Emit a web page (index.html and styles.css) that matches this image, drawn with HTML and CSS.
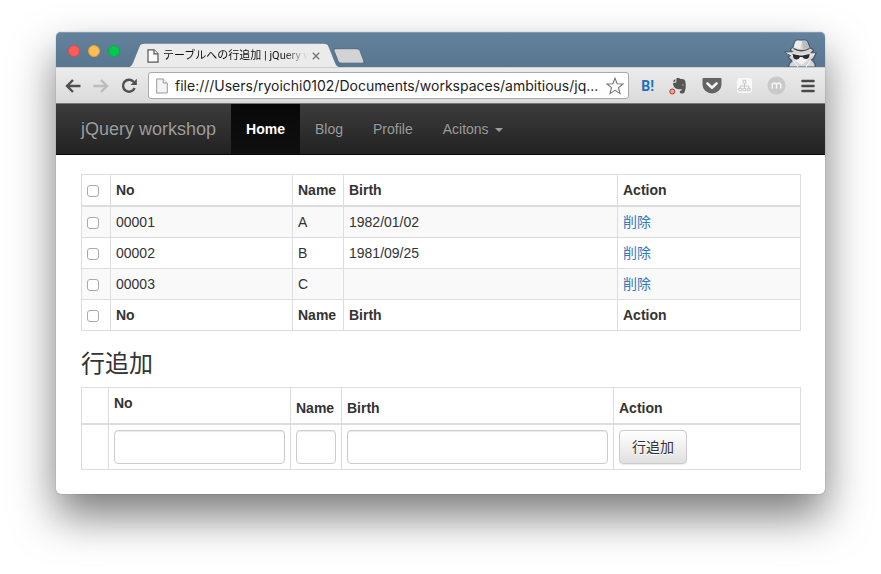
FILE: index.html
```html
<!DOCTYPE html>
<html lang="ja">
<head>
  <meta charset="UTF-8" />
  <meta name="viewport" content="width=device-width, initial-scale=1.0"/>
  <title>テーブルへの行追加 | jQuery workshop</title>
  <link rel="stylesheet" href="styles.css">
</head>
<body>

  <div class="window">
    <div class="tabbar">
      <div class="lights">
        <button class="light red" aria-label="Close window"></button>
        <button class="light yellow" aria-label="Minimize"></button>
        <button class="light green" aria-label="Full screen"></button>
      </div>
      <div class="tab">
        <svg class="tab-edge" width="16" height="24" viewBox="0 0 16 24">
          <path d="M0 24C3 23.500 3.500 22.500 5 19L11 4C12 1.500 13 .5 16 .5V24Z" fill="#ebebeb"/>
          <path d="M0 23.500C3 23.500 3.500 22.500 5 19L11 4C12 1.500 13 .5 16 .5" fill="none" stroke="#4b6680" stroke-opacity=".6"/>
        </svg>
        <div class="tab-body">
          <svg width="12" height="14" viewBox="0 0 12 14" fill="#fafafa" stroke="#555" stroke-width="1.200">
            <path d="M1 .8H7L11 4.800V13.200H1Z"/><path d="M7 .8V4.800H11"/>
          </svg>
          <span class="tab-title">テーブルへの行追加 | jQuery w</span>
          <button class="tab-close" aria-label="Close tab">
            <svg width="8" height="8" viewBox="0 0 8 8" stroke="#777" stroke-width="1.400"><path d="M.8 .8L7.200 7.200M7.200 .8L.8 7.200"/></svg>
          </button>
        </div>
        <svg class="tab-edge" width="16" height="24" viewBox="0 0 16 24">
          <path d="M16 24C13 23.500 12.500 22.500 11 19L5 4C4 1.500 3 .5 0 .5V24Z" fill="#ebebeb"/>
          <path d="M16 23.500C13 23.500 12.500 22.500 11 19L5 4C4 1.500 3 .5 0 .5" fill="none" stroke="#4b6680" stroke-opacity=".6"/>
        </svg>
      </div>
      <button class="new-tab" aria-label="New tab">
        <svg width="32" height="16" viewBox="0 0 32 16">
          <path d="M3 .7H23C25.500 .7 26.500 1.500 27.300 3.500L30.500 12C31.200 14 31 15.200 29 15.200H9C6.800 15.200 5.600 14.500 4.800 12.500L1.300 3.500C.6 1.600 1 .7 3 .7Z" fill="#d3d3d3" stroke="#516b83"/>
        </svg>
      </button>
      <svg class="incognito" width="34" height="28" viewBox="0 0 34 28">
        <path d="M10.500 3.500Q11 1 13.500 1H21Q23 1 23.800 3.200L26 9Q29.500 10 29.500 11.500L27.500 13.500L32 14L29.500 19.500L27.500 21Q31 23 31.500 28H4.500Q5 24 8 22L4 18L6.500 16.500L1.500 13L8 12.500Q6.500 11.500 6.500 10.500Q7 9 9 8.500Z" fill="#d6d6d6" stroke="#41566a" stroke-width="1.200"/>
        <path d="M11 3.500Q11.500 1.500 13.500 1.500L18 2.500L16 10L9.500 8.500Z" fill="#ececec"/>
        <path d="M18 2.500L21 1.500Q22.800 1.500 23.400 3.500L25.500 9L19 10Z" fill="#bdbdbd"/>
        <path d="M9.500 9.500Q17 14 25.500 9.500" fill="none" stroke="#4a4a4a" stroke-width="1.300"/>
        <path d="M10 14.500Q17 16.500 25 14.500L24 21L17.500 26L11 21.500Z" fill="#f0f0f0"/>
        <path d="M8.500 15L16 16.500H18.500L25.500 15Q25.500 20 22 20Q19.300 20 18.500 18H16Q15 20.500 12.500 20.500Q9 20.500 8.500 15Z" fill="#2b2b2b"/>
        <path d="M2.500 13.500L9 17M31 14.500L26 17.500M9 21.500L14 28M27 21L22 28" fill="none" stroke="#f5f5f5"/>
      </svg>
    </div>

    <div class="toolbar">
      <button class="tool back" aria-label="Back">
        <svg width="16" height="14" viewBox="0 0 16 14" fill="none" stroke="#4f4f4f" stroke-width="2.400"><path d="M15.500 7H2M8 1L2 7L8 13"/></svg>
      </button>
      <button class="tool forward" aria-label="Forward" disabled>
        <svg width="16" height="14" viewBox="0 0 16 14" fill="none" stroke="#bcbcbc" stroke-width="2.400"><path d="M.5 7H14M8 1L14 7L8 13"/></svg>
      </button>
      <button class="tool reload" aria-label="Reload">
        <svg width="16" height="16" viewBox="0 0 16 16"><path d="M12.800 4A6 6 0 1 0 13.600 10" fill="none" stroke="#4f4f4f" stroke-width="2.400"/><path d="M15.800 .8V7H9.600Z" fill="#4f4f4f"/></svg>
      </button>
      <div class="omnibox">
        <svg width="12" height="16" viewBox="0 0 12 16" fill="#f4f4f4" stroke="#999"><path d="M.7 1H7.200L11.300 5V15H.7Z"/><path d="M7.200 1V5H11.300"/></svg>
        <input type="text" aria-label="Address" value="file:///Users/ryoichi0102/Documents/workspaces/ambitious/jq...">
        <button class="tool" aria-label="Bookmark">
          <svg width="18" height="18" viewBox="0 0 18 18"><path d="M9 1.200L11.200 6.700L17 7L12.500 10.700L14 16.600L9 13.300L4 16.600L5.500 10.700L1 7L6.800 6.700Z" fill="#fff" stroke="#777" stroke-width="1.100"/></svg>
        </button>
      </div>
      <div class="extensions">
        <button class="tool hatena" aria-label="Hatena Bookmark">B!</button>
        <button class="tool" aria-label="Evernote">
          <svg width="18" height="18" viewBox="0 0 18 18">
            <path d="M7.500 1C9.500 .7 10.500 1 11.500 2C13.500 2 15.500 2 16.200 4C17 7 17 11 16 14C15.500 16 14.500 16.500 12.800 16.500C11 16.500 10.500 15.300 10.800 14.300C11 13.500 11.700 13.300 12.700 13.500V12.300C11 12 10.300 12.300 9.500 12.300C6.500 12 5 10.500 4.500 8.500C4 7.300 4 6.400 4.200 5.700H6.500C7 5.500 7.300 5.300 7.300 4.700Z" fill="#555"/>
            <path d="M6.300 2V4.500H3.800Z" fill="#333"/>
            <path d="M12.600 8C13.500 7 14.600 7.300 14.800 8.500Z" fill="#e8e8e8"/>
            <circle cx="3.300" cy="14.500" r="2.500" fill="#f0a294" stroke="#b03a2e"/>
          </svg>
        </button>
        <button class="tool" aria-label="Pocket">
          <svg width="20" height="18" viewBox="0 0 20 18"><path d="M1.500 1H18.500Q19.500 1 19.500 2V7.500A9.500 9 0 0 1 .5 7.500V2Q.5 1 1.500 1Z" fill="#646464"/><path d="M5.500 6.500L10 10.700L14.500 6.500" fill="none" stroke="#f2f2f2" stroke-width="2.600" stroke-linecap="round" stroke-linejoin="round"/></svg>
        </button>
        <button class="tool" aria-label="Sitemap">
          <svg width="15" height="15" viewBox="0 0 16 16"><rect width="16" height="16" rx="3" fill="#f8f8f8"/><path d="M6.500 2.500H9.500V5.500H6.500ZM8 5.500V11M3.500 11V8.500H12.500V11M2 11H5V13.500H2ZM6.500 11H9.500V13.500H6.500ZM11 11H14V13.500H11Z" fill="none" stroke="#c4c4c4"/></svg>
        </button>
        <button class="tool" aria-label="m">
          <svg width="19" height="19" viewBox="0 0 20 20"><circle cx="10" cy="10" r="9.500" fill="#c9c9c9"/><path d="M5.500 13.500V7.500M5.500 9.500Q5.800 7.500 7.800 7.500T10 9.500V13.500M10 9.500Q10.300 7.500 12.300 7.500T14.500 9.500V13.500" fill="none" stroke="#f4f4f4" stroke-width="1.600"/></svg>
        </button>
        <button class="tool" aria-label="Menu">
          <svg width="14" height="14" viewBox="0 0 14 14" stroke="#4a4a4a" stroke-width="2.600" stroke-linecap="round"><path d="M1.500 2H12.500M1.500 7H12.500M1.500 12H12.500"/></svg>
        </button>
      </div>
    </div>

    <nav class="navbar">
      <a class="brand" href="#">jQuery workshop</a>
      <a class="active" href="#">Home</a>
      <a href="#">Blog</a>
      <a href="#">Profile</a>
      <button class="dropdown">Acitons <span class="caret"></span></button>
    </nav>

    <main>
      <table class="list">
        <colgroup>
          <col class="col-check"><col class="col-no"><col class="col-name"><col class="col-birth"><col>
        </colgroup>
        <thead>
          <tr>
            <th><input type="checkbox" aria-label="すべて選択"></th>
            <th>No</th><th>Name</th><th>Birth</th><th>Action</th>
          </tr>
        </thead>
        <tbody>
          <tr>
            <td><input type="checkbox" aria-label="00001"></td>
            <td>00001</td><td>A</td><td>1982/01/02</td><td><a href="#">削除</a></td>
          </tr>
          <tr>
            <td><input type="checkbox" aria-label="00002"></td>
            <td>00002</td><td>B</td><td>1981/09/25</td><td><a href="#">削除</a></td>
          </tr>
          <tr>
            <td><input type="checkbox" aria-label="00003"></td>
            <td>00003</td><td>C</td><td></td><td><a href="#">削除</a></td>
          </tr>
        </tbody>
        <tfoot>
          <tr>
            <th><input type="checkbox" aria-label="すべて選択"></th>
            <th>No</th><th>Name</th><th>Birth</th><th>Action</th>
          </tr>
        </tfoot>
      </table>

      <h3>行追加</h3>

      <table class="add">
        <colgroup>
          <col class="col-check"><col class="col-no"><col class="col-name"><col class="col-birth"><col>
        </colgroup>
        <thead>
          <tr>
            <th></th>
            <th><label class="label-no" for="no">No</label></th>
            <th><label for="name">Name</label></th>
            <th><label for="birth">Birth</label></th>
            <th>Action</th>
          </tr>
        </thead>
        <tbody>
          <tr>
            <td></td>
            <td><input class="field" type="text" id="no"></td>
            <td><input class="field" type="text" id="name"></td>
            <td><input class="field" type="text" id="birth"></td>
            <td><button class="btn">行追加</button></td>
          </tr>
        </tbody>
      </table>
    </main>
  </div>

</body>
</html>
```
FILE: styles.css
```css
* {
  box-sizing: border-box;
}

body {
  margin: 0;
  padding: 32px 56px 72px;
  background: #fff;
  color: #333;
  font-family: "Liberation Sans", "Noto Sans CJK JP", sans-serif;
  font-size: 14px;
  line-height: 20px;
}

button,
input {
  font: inherit;
  color: inherit;
}

svg {
  display: block;
  flex: none;
}

.window {
  background: #fff;
  border-radius: 5px;
  box-shadow: 0 0 1px rgba(0, 0, 0, 0.5), 0 22px 44px rgba(0, 0, 0, 0.52);
}

/* browser tabs */
.tabbar {
  display: flex;
  align-items: flex-end;
  height: 35px;
  padding: 0 7px 0 12px;
  border-radius: 5px 5px 0 0;
  background: linear-gradient(#64829d, #597690);
  box-shadow: inset 0 1px #7f9ab1;
}

.lights {
  display: flex;
  gap: 8px;
  margin-bottom: 10px;
}

.light {
  width: 12px;
  height: 12px;
  padding: 0;
  border: 1px solid;
  border-radius: 50%;
}

.red {
  background: #ff5c5a;
  border-color: #e0484a;
}

.yellow {
  background: #ffbe50;
  border-color: #e0a03c;
}

.green {
  background: #00c951;
  border-color: #0bab48;
}

.tab {
  display: flex;
  margin-left: 8px;
}

.tab-body {
  display: flex;
  align-items: center;
  width: 180px;
  height: 24px;
  padding: 0 4px 0 3px;
  background: #ebebeb;
  border-top: 1px solid #8096aa;
}

.tab-title {
  flex: 1;
  margin: 0 4px;
  overflow: hidden;
  white-space: nowrap;
  color: #111;
  font-family: Roboto, "Noto Sans CJK JP", sans-serif;
  font-size: 11px;
  -webkit-mask-image: linear-gradient(to right, #000 82%, transparent);
  mask-image: linear-gradient(to right, #000 82%, transparent);
}

.tab-close,
.new-tab,
.tool {
  flex: none;
  padding: 0;
  border: 0;
  background: none;
}

.new-tab {
  margin: 0 auto 3px -7px;
}

/* browser toolbar */
.toolbar {
  display: flex;
  align-items: center;
  height: 37px;
  padding: 0 10px 0 9px;
  border-top: 1px solid #c9ced2;
  border-bottom: 1px solid #777;
  background: linear-gradient(#ececec, #dadada);
}

.forward {
  margin-left: 12px;
}

.reload {
  margin: 0 11px 0 12px;
}

.omnibox {
  flex: 1;
  display: flex;
  align-items: center;
  min-width: 0;
  height: 27px;
  padding: 0 4px 0 7px;
  border: 1px solid #a9a9a9;
  border-radius: 3px;
  background: #fff;
}

.omnibox input {
  flex: 1;
  min-width: 0;
  margin-left: 7px;
  padding: 0;
  border: 0;
  outline: none;
  background: none;
  color: #222;
  font-family: Inter, sans-serif;
  font-size: 14px;
}

.extensions {
  display: flex;
  align-items: center;
  gap: 15px;
  margin-left: 12px;
}

.hatena {
  color: #1d72b8;
  font-family: Roboto, sans-serif;
  font-weight: bold;
}

/* page navigation */
.navbar {
  display: flex;
  padding-left: 10px;
  border-bottom: 1px solid #080808;
  background: linear-gradient(#3c3c3c, #222);
}

.navbar a,
.dropdown {
  padding: 15px;
  border: 0;
  background: none;
  color: #9d9d9d;
  text-decoration: none;
  text-shadow: 0 -1px rgba(0, 0, 0, 0.25);
}

.navbar .brand {
  font-size: 18px;
}

.navbar .active {
  background: linear-gradient(#080808, #0f0f0f);
  color: #fff;
  font-weight: bold;
}

.caret {
  display: inline-block;
  margin-left: 2px;
  vertical-align: middle;
  border-top: 4px solid;
  border-right: 4px solid transparent;
  border-left: 4px solid transparent;
}

/* page content */
main {
  padding: 19px 24px 24px 25px;
}

table {
  width: 100%;
  table-layout: fixed;
  border-collapse: collapse;
}

th,
td {
  padding: 5px;
  border: 1px solid #ddd;
  text-align: left;
  vertical-align: top;
}

thead th {
  border-bottom-width: 2px;
  vertical-align: bottom;
}

.list tbody tr:nth-child(odd) {
  background: #f9f9f9;
}

.list a {
  color: #337ab7;
  text-decoration: none;
}

.col-check {
  width: 29px;
}

.add .col-check {
  width: 27px;
}

.col-no {
  width: 182px;
}

.col-name {
  width: 51px;
}

.col-birth {
  width: 274px;
}

.add .col-birth {
  width: 272px;
}

input[type="checkbox"] {
  appearance: none;
  display: block;
  width: 12px;
  height: 12px;
  margin: 5px 0 3px;
  border: 1px solid #aaa;
  border-radius: 3px;
  background: #fff;
}

h3 {
  margin: 20px 0 10px;
  font-size: 24px;
  font-weight: normal;
  line-height: 26px;
}

label {
  display: block;
}

.label-no {
  margin-bottom: 5px;
}

.field {
  display: block;
  width: 100%;
  height: 34px;
  padding: 6px 12px;
  border: 1px solid #ccc;
  border-radius: 4px;
  background: #fff;
  box-shadow: inset 0 1px 1px rgba(0, 0, 0, 0.08);
}

.btn {
  display: block;
  height: 34px;
  padding: 6px 12px;
  border: 1px solid #ccc;
  border-radius: 4px;
  background: linear-gradient(#fff, #e0e0e0);
  box-shadow: 0 1px 1px rgba(0, 0, 0, 0.08);
  text-shadow: 0 1px #fff;
}
```
